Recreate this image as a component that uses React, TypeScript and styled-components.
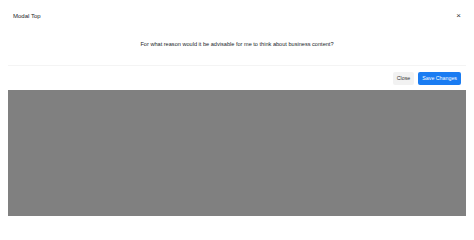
import React from 'react';
import styled, { createGlobalStyle } from 'styled-components';

const GlobalStyle = createGlobalStyle`
    html, body {
        margin: 0;
        padding: 0;
        background: #ffffff;
        height: 100%;
    }
    #root {
        height: 100%;
    }
`;

const Page = styled.div`
    height: 216px;
    padding: 0 8px;
    display: flex;
    flex-direction: column;
    font-family: "Liberation Sans", Arial, sans-serif;
    color: #212529;
    box-sizing: border-box;
`;

const Modal = styled.div`
    background: #ffffff;
    display: flex;
    flex-direction: column;
`;

const Header = styled.div`
    height: 32px;
    padding: 0 5px;
    display: flex;
    align-items: center;
    justify-content: space-between;
`;

const Title = styled.h5`
    margin: 0;
    font-size: 6px;
    font-weight: 400;
`;

const CloseX = styled.button`
    border: none;
    background: none;
    padding: 0;
    font-size: 8px;
    line-height: 1;
    color: #333;
    cursor: pointer;
`;

const Body = styled.div`
    height: 34px;
    padding-bottom: 10px;
    box-sizing: border-box;
    display: flex;
    align-items: center;
    justify-content: center;
    font-size: 5.6px;
    border-bottom: 1px solid #f4f4f4;
`;

const Footer = styled.div`
    height: 24px;
    padding: 0 5px;
    display: flex;
    align-items: center;
    justify-content: flex-end;
    gap: 4px;
`;

const Button = styled.button<{ $primary?: boolean }>`
    border: none;
    border-radius: 2px;
    height: 13px;
    padding: 0 4px;
    font-family: inherit;
    font-size: 5.3px;
    color: ${(p) => (p.$primary ? '#ffffff' : '#333333')};
    background: ${(p) => (p.$primary ? '#1a7cf2' : '#f2f2f2')};
    cursor: pointer;
`;

const Backdrop = styled.div`
    flex: 1;
    background: #808080;
`;

export default function App() {
    return (
        <>
            <GlobalStyle />
            <Page>
                <Modal>
                    <Header>
                        <Title>Modal Top</Title>
                        <CloseX>×</CloseX>
                    </Header>
                    <Body>For what reason would it be advisable for me to think about business content?</Body>
                    <Footer>
                        <Button>Close</Button>
                        <Button $primary>Save Changes</Button>
                    </Footer>
                </Modal>
                <Backdrop />
            </Page>
        </>
    );
}
